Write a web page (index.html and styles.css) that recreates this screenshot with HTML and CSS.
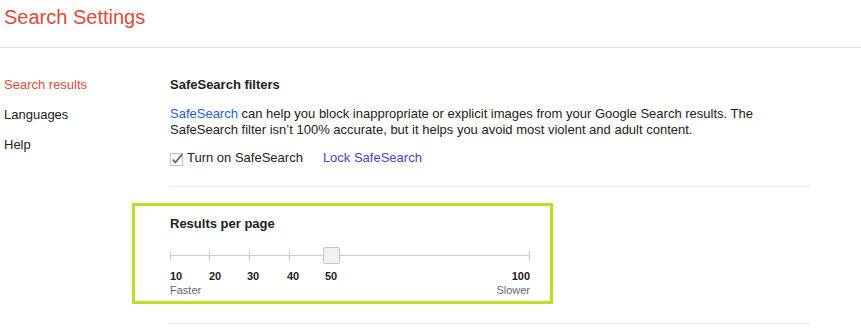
FILE: index.html
```html
<!DOCTYPE html>
<html lang="en">
<head>
  <meta charset="UTF-8" />
  <meta name="viewport" content="width=device-width, initial-scale=1.0"/>
  <title>Search Settings</title>
  <link rel="stylesheet" href="styles.css">
</head>
<body>

  <div class="header">
    <h1>Search Settings</h1>
  </div>

  <div class="layout">
    <div class="nav">
      <a class="nav-item active">Search results</a>
      <a class="nav-item">Languages</a>
      <a class="nav-item">Help</a>
    </div>

    <div class="main">
      <div class="section">
        <h2>SafeSearch filters</h2>
        <p class="desc"><a class="link">SafeSearch</a> can help you block inappropriate or explicit images from your Google Search results. The SafeSearch filter isn’t 100% accurate, but it helps you avoid most violent and adult content.</p>
        <div class="check-row">
          <label class="check">
            <svg width="14" height="14" viewBox="0 0 14 14">
              <rect x="0.5" y="1.5" width="12" height="12" fill="#fff" stroke="#c4c4c4"/>
              <path d="M2.8 7.6 L5.4 10.4 L12.2 2.2" fill="none" stroke="#6a6a6a" stroke-width="1.8"/>
            </svg>
            Turn on SafeSearch
          </label>
          <a class="link visited">Lock SafeSearch</a>
        </div>
      </div>

      <div class="divider"></div>

      <div class="results-box">
        <h2>Results per page</h2>
        <div class="slider">
          <div class="track"></div>
          <span class="tick" style="left: 0px"></span>
          <span class="tick" style="left: 39px"></span>
          <span class="tick" style="left: 79px"></span>
          <span class="tick" style="left: 119px"></span>
          <span class="tick" style="left: 359px"></span>
          <div class="handle" style="left: 153px"></div>
        </div>
        <div class="values">
          <span style="left: 0px">10</span>
          <span style="left: 39px">20</span>
          <span style="left: 77px">30</span>
          <span style="left: 117px">40</span>
          <span style="left: 155px">50</span>
          <span class="last">100</span>
        </div>
        <div class="speed">
          <span>Faster</span>
          <span>Slower</span>
        </div>
      </div>

      <div class="divider bottom"></div>
    </div>
  </div>

</body>
</html>
```

FILE: styles.css
```css
body {
  margin: 0;
  padding: 0;
  font-family: "Liberation Sans", Arial, sans-serif;
  font-size: 13px;
  line-height: 16px;
  color: #222;
  background: #fff;
  overflow: hidden;
}

.header {
  height: 47px;
  border-bottom: 1px solid #e5e5e5;
  box-sizing: content-box;
}

.header h1 {
  margin: 0;
  padding: 5px 0 0 4px;
  font-size: 20px;
  line-height: 24px;
  font-weight: normal;
  color: #dd4b39;
}

.layout {
  display: flex;
  padding-top: 29px;
}

.nav {
  width: 166px;
  padding-left: 4px;
  display: flex;
  flex-direction: column;
  gap: 14px;
}

.nav-item {
  color: #222;
  cursor: pointer;
}

.nav-item.active {
  color: #dd4b39;
}

.main {
  width: 640px;
}

.main h2 {
  margin: 0;
  font-size: 13px;
  line-height: 16px;
  font-weight: bold;
  color: #222;
}

.desc {
  margin: 13px 0 0;
}

.link {
  color: #1a62d8;
  cursor: pointer;
}

.link.visited {
  color: #4a3ec8;
}

.check-row {
  display: flex;
  align-items: center;
  gap: 20px;
  margin-top: 12px;
}

.check {
  display: flex;
  align-items: center;
  gap: 3px;
}

.check svg {
  display: block;
  margin-top: 1px;
}

.divider {
  height: 1px;
  background: #ebebeb;
  margin-top: 20px;
}

.divider.bottom {
  margin-top: 19px;
}

.results-box {
  margin: 16px 0 0 -38px;
  width: 360px;
  padding: 10px 20px 4px 35px;
  border: 3px solid #b7e21e;
}

.slider {
  position: relative;
  height: 18px;
  margin-top: 15px;
}

.track {
  position: absolute;
  left: 0;
  right: 1px;
  top: 8px;
  height: 1px;
  background: #ccc;
}

.tick {
  position: absolute;
  top: 4px;
  width: 1px;
  height: 10px;
  background: #ccc;
}

.handle {
  position: absolute;
  top: 0;
  width: 15px;
  height: 15px;
  border: 1px solid #c4c4c4;
  border-radius: 2px;
  background: #f1f1f1;
}

.values {
  position: relative;
  height: 13px;
  margin-top: 5px;
  font-size: 11px;
  line-height: 13px;
  font-weight: bold;
  color: #222;
}

.values span {
  position: absolute;
  top: 0;
}

.values .last {
  right: 0;
}

.speed {
  display: flex;
  justify-content: space-between;
  margin-top: 1px;
  font-size: 11px;
  line-height: 13px;
  color: #666;
}
```
